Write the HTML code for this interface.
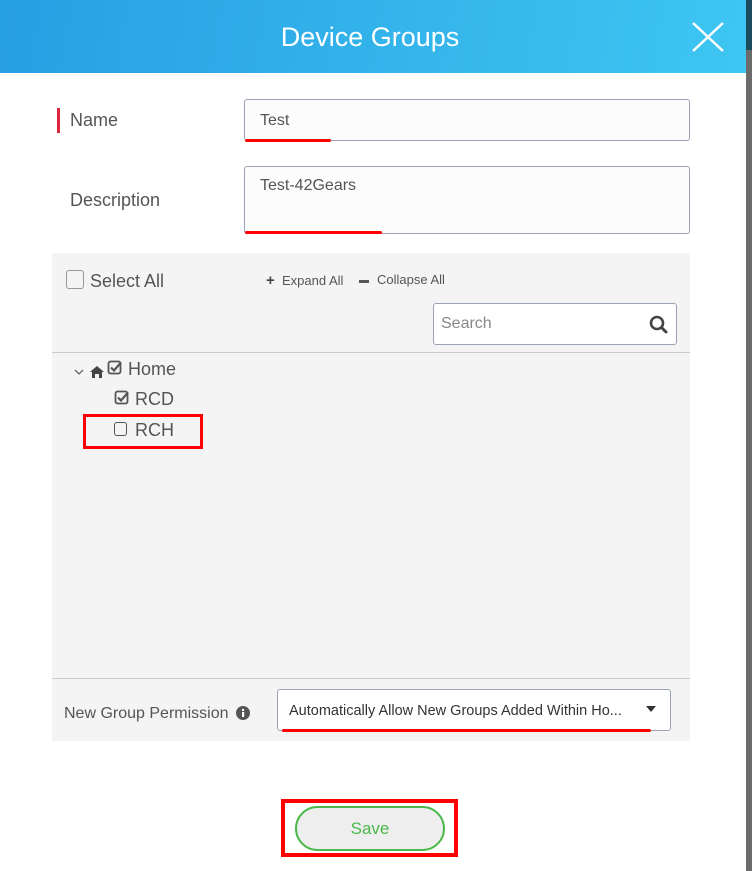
<!DOCTYPE html>
<html><head><meta charset="utf-8"><style>
*{box-sizing:border-box;margin:0;padding:0}
body{width:752px;height:871px;overflow:hidden;background:#6b6b6b;font-family:"Liberation Sans",sans-serif;position:relative}
.abs{position:absolute}
.modal{left:0;top:0;width:746px;height:871px;background:#fff}
.hdr{left:0;top:0;width:746px;height:73px;background:linear-gradient(100deg,#279fe3,#3ec6f2)}
.title{left:0;top:22px;width:740px;text-align:center;color:#fff;font-size:27px}
.lbl{color:#555;font-size:18px}
.inp{background:#fcfcfc;border:1px solid #9aa3b5;border-radius:3px;color:#555;font-size:16px;padding:12px 15px}
.red{background:#f00;height:3px;border-radius:2px}
.cb{display:inline-block;border:1.6px solid #555;border-radius:3px;position:absolute}
</style></head><body>
<div class="abs" style="left:746px;top:0;width:6px;height:50px;background:#1d4a5c"></div>
<div class="abs modal">
<div class="abs hdr"></div>
<div class="abs title">Device Groups</div>
<svg class="abs" style="left:690px;top:20px" width="36" height="34"><path d="M3 3L33 31M33 3L3 31" stroke="#fff" stroke-width="2.5"/></svg>
<div class="abs" style="left:57px;top:108px;width:3px;height:25px;background:#d9263c"></div>
<div class="abs lbl" style="left:70px;top:110px">Name</div>
<div class="abs inp" style="left:244px;top:99px;width:446px;height:42px;padding-top:12px">Test</div>
<div class="abs red" style="left:245px;top:139px;width:86px"></div>
<div class="abs lbl" style="left:70px;top:190px">Description</div>
<div class="abs inp" style="left:244px;top:166px;width:446px;height:68px;padding-top:10px">Test-42Gears</div>
<div class="abs red" style="left:245px;top:231px;width:137px"></div>
<div class="abs" style="left:52px;top:253px;width:638px;height:488px;background:#f4f4f4"></div>
<div class="cb" style="left:66px;top:270px;width:18px;height:19px;border-color:#999"></div>
<div class="abs lbl" style="left:90px;top:271px;font-size:18px">Select All</div>
<div class="abs" style="left:266px;top:272px;font-size:13px;color:#555"><b style="font-size:15px;color:#444">+</b>&nbsp; Expand All</div>
<div class="abs" style="left:359px;top:280px;width:10px;height:3px;background:#555"></div>
<div class="abs" style="left:377px;top:272px;font-size:13px;color:#555">Collapse All</div>
<div class="abs inp" style="left:433px;top:303px;width:244px;height:42px;background:#fff;color:#888;padding:11px 7px;font-size:16px">Search</div>
<svg class="abs" style="left:649px;top:315px" width="20" height="20"><circle cx="8" cy="8" r="6" fill="none" stroke="#444" stroke-width="2.6"/><path d="M12.5 12.5L17 17" stroke="#444" stroke-width="3" stroke-linecap="round"/></svg>
<div class="abs" style="left:52px;top:352px;width:638px;height:1px;background:#ccc"></div>
<svg class="abs" style="left:74px;top:364px" width="60" height="16"><path d="M1 6l4 4 4-4" fill="none" stroke="#666" stroke-width="1.3"/><path d="M16 8l7-6 7 6h-2v6h-3v-4h-4v4h-3v-6z" fill="#444"/></svg>
<svg class="abs" style="left:107px;top:360px" width="16" height="16"><rect x="1.5" y="1.5" width="12" height="12" rx="2" fill="none" stroke="#555" stroke-width="1.8"/><path d="M4 7.5l3 3 7-8" fill="none" stroke="#555" stroke-width="2.2"/></svg>
<div class="abs lbl" style="left:128px;top:359px">Home</div>
<svg class="abs" style="left:114px;top:390px" width="16" height="16"><rect x="1.5" y="1.5" width="12" height="12" rx="2" fill="none" stroke="#555" stroke-width="1.8"/><path d="M4 7.5l3 3 7-8" fill="none" stroke="#555" stroke-width="2.2"/></svg>
<div class="abs lbl" style="left:135px;top:389px">RCD</div>
<div class="cb" style="left:114px;top:422px;width:13px;height:14px"></div>
<div class="abs lbl" style="left:135px;top:420px">RCH</div>
<div class="abs" style="left:83px;top:414px;width:120px;height:35px;border:3px solid #f00"></div>
<div class="abs" style="left:52px;top:678px;width:638px;height:1px;background:#ccc"></div>
<div class="abs" style="left:64px;top:705px;font-size:16px;color:#555">New Group Permission</div>
<svg class="abs" style="left:236px;top:706px" width="14" height="14"><circle cx="7" cy="7" r="7" fill="#555"/><rect x="6" y="6" width="2.2" height="5" fill="#fff"/><circle cx="7" cy="4" r="1.2" fill="#fff"/></svg>
<div class="abs inp" style="left:277px;top:689px;width:394px;height:42px;background:#fff;font-size:14.5px;color:#333;padding:13px 11px">Automatically Allow New Groups Added Within Ho...</div>
<svg class="abs" style="left:646px;top:706px" width="10" height="6"><path d="M0 0h10L5 6z" fill="#333"/></svg>
<div class="abs red" style="left:282px;top:729px;width:369px"></div>
<div class="abs" style="left:281px;top:799px;width:177px;height:58px;border:4px solid #f00"></div>
<div class="abs" style="left:295px;top:806px;width:150px;height:45px;border:2px solid #4cb84c;border-radius:23px;background:#eee;color:#4cb84c;font-size:17px;text-align:center;line-height:41px">Save</div>
</div>
</body></html>
